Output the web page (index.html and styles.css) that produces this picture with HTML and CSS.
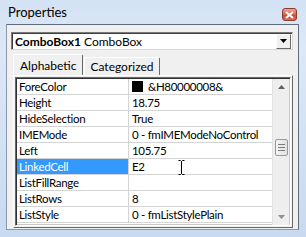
FILE: index.html
```html
<!DOCTYPE html>
<html lang="en">
<head>
  <meta charset="UTF-8">
  <title>Properties</title>
  <link rel="stylesheet" href="styles.css">
</head>
<body>
  <div class="window">
    <div class="titlebar">
      <span class="title">Properties</span>
      <span class="close">
        <svg width="9" height="8" viewBox="0 0 9 8"><path d="M1 1 L8 7 M8 1 L1 7" stroke="#fff" stroke-width="2"/></svg>
      </span>
    </div>
    <div class="panel">
      <div class="combo">
        <span class="combo-text"><b>ComboBox1</b> ComboBox</span>
        <span class="combo-btn">
          <svg width="7" height="4" viewBox="0 0 7 4"><path d="M0 0 H7 L3.5 4 Z" fill="#000"/></svg>
        </span>
      </div>
      <div class="tabs">
        <div class="tab active">Alphabetic</div>
        <div class="tab">Categorized</div>
      </div>
      <div class="grid-frame">
        <div class="grid">
          <div class="rows" id="rows"></div>
          <div class="scrollbar">
            <div class="arrow up"><svg width="7" height="4" viewBox="0 0 7 4"><path d="M0 4 H7 L3.5 0 Z" fill="#606060"/></svg></div>
            <div class="track">
              <div class="thumb">
                <svg width="7" height="9" viewBox="0 0 7 9"><path d="M0 1.5 H7 M0 4.5 H7 M0 7.5 H7" stroke="#7a7a7a" stroke-width="1"/></svg>
              </div>
            </div>
            <div class="arrow down"><svg width="7" height="4" viewBox="0 0 7 4"><path d="M0 0 H7 L3.5 4 Z" fill="#909090"/></svg></div>
          </div>
          <svg class="ibeam" width="7" height="15" viewBox="0 0 7 15"><path d="M0.5 0.5 H2.5 L3.5 1.5 L4.5 0.5 H6.5 M3.5 1.5 V13.5 M0.5 14.5 H2.5 L3.5 13.5 L4.5 14.5 H6.5" stroke="#000" stroke-width="1" fill="none"/></svg>
        </div>
      </div>
    </div>
  </div>

  <script>
    const props = [
      { name: "ForeColor", value: "&H80000008&", swatch: "#000" },
      { name: "Height", value: "18.75" },
      { name: "HideSelection", value: "True" },
      { name: "IMEMode", value: "0 - fmIMEModeNoControl" },
      { name: "Left", value: "105.75" },
      { name: "LinkedCell", value: "E2", selected: true },
      { name: "ListFillRange", value: "" },
      { name: "ListRows", value: "8" },
      { name: "ListStyle", value: "0 - fmListStylePlain" }
    ];

    const rows = document.getElementById("rows");
    props.forEach(p => {
      const row = document.createElement("div");
      row.className = "row" + (p.selected ? " selected" : "");
      const sw = p.swatch ? `<span class="swatch" style="background:${p.swatch}"></span>` : "";
      row.innerHTML = `
        <div class="cell name">${p.name}</div>
        <div class="cell value">${sw}<span></span></div>
      `;
      row.querySelector(".value span:last-child").textContent = p.value;
      rows.appendChild(row);
    });
  </script>
</body>
</html>
```

FILE: styles.css
```css
body {
  margin: 0;
  width: 306px;
  height: 237px;
  overflow: hidden;
  font-family: Lato, "Open Sans", sans-serif;
  background: #c3d6ee;
}
.window {
  height: 237px;
  display: flex;
  flex-direction: column;
  background: linear-gradient(to bottom, #d3e2f4 0%, #dce8f6 20%, #c8daf0 100%);
}
.titlebar {
  height: 24px;
  display: flex;
  align-items: flex-start;
  justify-content: space-between;
  padding: 0 9px 0 8px;
  box-sizing: border-box;
}
.title {
  font-size: 13px;
  color: #000;
  margin-top: 4px;
}
.close {
  margin-top: 8px;
  width: 15px;
  height: 13px;
  box-sizing: border-box;
  border: 1px solid #8e3b2b;
  border-radius: 3px;
  background: linear-gradient(to bottom, #e9a493 0%, #d8664d 50%, #c44a30 51%, #d96c4f 100%);
  display: flex;
  align-items: center;
  justify-content: center;
}
.panel {
  margin: 0 7px 7px 6px;
  flex: 1;
  background: #f0f0f0;
  border: 1px solid #5f6f80;
  border-bottom-color: #8c9aa8;
  border-left-color: #8c9aa8;
  padding: 7px 5px 0 4px;
  display: flex;
  flex-direction: column;
}
.combo {
  height: 18px;
  box-sizing: border-box;
  background: #fff;
  border: 1px solid #7a7a7a;
  border-right-color: #d8d8d8;
  border-bottom-color: #d8d8d8;
  box-shadow: inset 1px 1px 0 #404040;
  display: flex;
  align-items: center;
  justify-content: space-between;
  padding-left: 3px;
}
.combo-text {
  font-size: 12px;
  color: #000;
  white-space: nowrap;
}
.combo-btn {
  width: 15px;
  height: 15px;
  box-sizing: border-box;
  margin-right: 1px;
  background: #f0f0f0;
  border: 1px solid #fff;
  border-right-color: #696969;
  border-bottom-color: #696969;
  display: flex;
  align-items: center;
  justify-content: center;
}
.tabs {
  display: flex;
  align-items: flex-end;
  height: 22px;
  margin-top: 3px;
  padding-left: 2px;
}
.tab {
  font-size: 12px;
  color: #000;
  padding: 0 5px;
  height: 18px;
  line-height: 17px;
  border: 1px solid #fff;
  border-right: 1px solid #696969;
  border-bottom: none;
  border-radius: 2px 2px 0 0;
  box-sizing: border-box;
}
.tab.active {
  height: 21px;
  line-height: 21px;
  padding: 0 6px;
  margin-right: 1px;
}
.grid-frame {
  height: 153px;
  box-sizing: border-box;
  margin-left: 2px;
  margin-right: 0;
  border: 1px solid #fff;
  border-right-color: #696969;
  border-bottom-color: #696969;
  padding: 1px;
}
.grid {
  position: relative;
  height: 100%;
  box-sizing: border-box;
  border: 1px solid #696969;
  border-right-color: #fff;
  border-bottom-color: #fff;
  box-shadow: inset 1px 1px 0 #303030, inset -1px -1px 0 #c8c8c8;
  padding: 1px 1px 0 1px;
  display: flex;
  background: #fff;
}
.rows {
  flex: 1;
  display: flex;
  flex-direction: column;
}
.row {
  display: grid;
  grid-template-columns: 112px 1fr;
  height: 16px;
  font-size: 11.5px;
  letter-spacing: -0.3px;
  line-height: 15px;
  color: #000;
}
.cell {
  border-bottom: 1px solid #d4d4d4;
  white-space: nowrap;
  overflow: hidden;
  padding-left: 2px;
}
.cell.name {
  border-right: 1px solid #d4d4d4;
}
.cell.value {
  display: flex;
  align-items: center;
  padding-left: 3px;
}
.swatch {
  width: 11px;
  height: 11px;
  margin-right: 5px;
}
.row.selected .name {
  background: #3399ff;
  color: #fff;
}
.scrollbar {
  width: 16px;
  background: #eeeeee;
  border-left: 1px solid #e2e2e2;
  display: flex;
  flex-direction: column;
}
.arrow {
  height: 16px;
  display: flex;
  align-items: center;
  justify-content: center;
}
.track {
  flex: 1;
  display: flex;
  align-items: center;
  justify-content: center;
  padding-bottom: 10px;
}
.thumb {
  width: 13px;
  height: 17px;
  box-sizing: border-box;
  border: 1px solid #9a9a9a;
  border-radius: 2px;
  background: linear-gradient(to right, #f4f4f4, #e2e2e2);
  display: flex;
  align-items: center;
  justify-content: center;
}
.ibeam {
  position: absolute;
  left: 162px;
  top: 82px;
}
```
